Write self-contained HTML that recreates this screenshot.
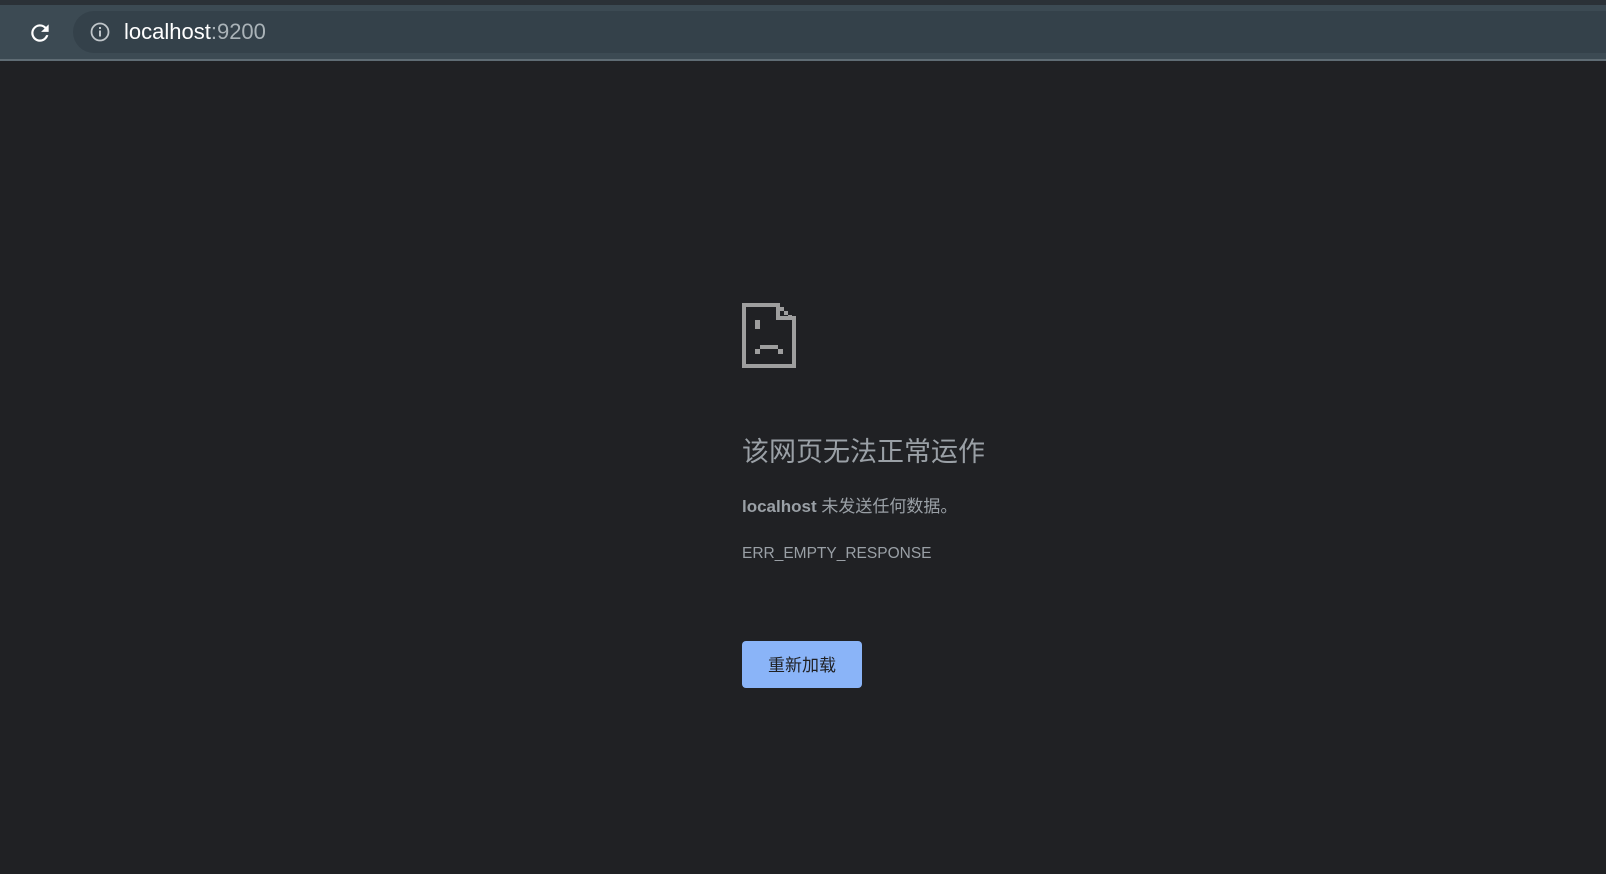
<!DOCTYPE html>
<html><head><meta charset="utf-8"><style>
body{margin:0;width:1606px;height:874px;background:#202124;overflow:hidden;font-family:"Liberation Sans","Noto Sans CJK SC",sans-serif;position:relative}
.top{position:absolute;left:0;top:0;width:1606px;height:5px;background:#2b3137}
.bar{position:absolute;left:0;top:5px;width:1606px;height:54px;background:#3c4a53;border-bottom:2px solid #5f6c74}
.omni{position:absolute;left:73px;top:11px;width:1560px;height:42px;border-radius:21px;background:#34414a}
.url{position:absolute;left:124px;top:19px;font-size:22px;color:#fff;line-height:26px}
.url span{color:#aab3b8}
.t{position:absolute;left:742px;color:#9aa0a6}
.btn{position:absolute;left:742px;top:641px;width:120px;height:47px;border-radius:4px;background:#8ab4f8;color:#202124;font-size:17px;line-height:49px;text-align:center}
</style></head><body>
<div class="top"></div>
<div class="bar"></div>
<div class="omni"></div>
<svg style="position:absolute;left:27px;top:20px" width="26" height="26" viewBox="0 0 24 24"><path d="M17.6 6.4A8 8 0 1 0 19.7 14h-2.1A6 6 0 1 1 12 6c1.7 0 3.1.7 4.2 1.8L13 11h7V4z" fill="#fff"/></svg>
<svg style="position:absolute;left:89px;top:21px" width="22" height="22" viewBox="0 0 22 22"><circle cx="11" cy="11" r="8.5" fill="none" stroke="#c0c6ca" stroke-width="1.8"/><rect x="10" y="9.5" width="2" height="6" fill="#c0c6ca"/><rect x="10" y="6" width="2" height="2" fill="#c0c6ca"/></svg>
<div class="url">localhost<span>:9200</span></div>
<svg style="position:absolute;left:742px;top:303px" width="54" height="65" viewBox="0 0 54 65" shape-rendering="crispEdges" fill="#9e9e9e">
<rect x="0" y="0" width="4" height="65"/><rect x="0" y="61" width="54" height="4"/><rect x="50" y="17" width="4" height="48"/><rect x="0" y="0" width="38" height="4"/><rect x="34" y="0" width="4" height="17"/><rect x="34" y="13" width="20" height="4"/><rect x="38" y="4" width="4" height="4"/><rect x="42" y="8" width="4" height="4"/><rect x="46" y="12" width="4" height="4"/>
<rect x="13" y="17" width="5" height="9"/><rect x="13" y="46" width="5" height="5"/><rect x="18" y="42" width="18" height="4"/><rect x="36" y="46" width="5" height="5"/></svg>
<div class="t" style="top:436px;font-size:27px;line-height:32px">该网页无法正常运作</div>
<div class="t" style="top:496px;font-size:17px;line-height:22px"><b>localhost</b> 未发送任何数据。</div>
<div class="t" style="top:543px;font-size:15.5px;line-height:22px">ERR_EMPTY_RESPONSE</div>
<div class="btn">重新加载</div>
</body></html>
